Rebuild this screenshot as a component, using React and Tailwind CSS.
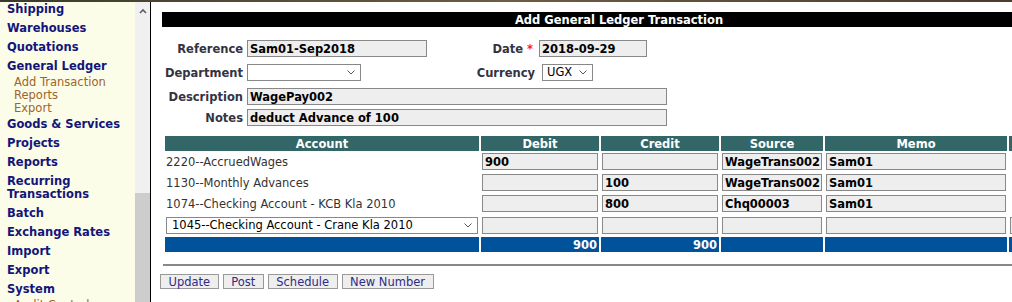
const menu = [
  { t: "Shipping" },
  { t: "Warehouses" },
  { t: "Quotations" },
  { t: "General Ledger", sub: ["Add Transaction", "Reports", "Export"] },
  { t: "Goods & Services" },
  { t: "Projects" },
  { t: "Reports" },
  { t: "Recurring Transactions" },
  { t: "Batch" },
  { t: "Exchange Rates" },
  { t: "Import" },
  { t: "Export" },
  { t: "System", sub: ["Audit Control"] },
];

const lines = [
  { account: "2220--AccruedWages", debit: "900", credit: "", source: "WageTrans002", memo: "Sam01" },
  { account: "1130--Monthly Advances", debit: "", credit: "100", source: "WageTrans002", memo: "Sam01" },
  { account: "1074--Checking Account - KCB Kla 2010", debit: "", credit: "800", source: "Chq00003", memo: "Sam01" },
];

function Chevron() {
  return (
    <svg width="8" height="5" viewBox="0 0 8 5" className="shrink-0">
      <polyline points="0.5,0.5 4,4 7.5,0.5" fill="none" stroke="#555" strokeWidth="1" />
    </svg>
  );
}

function Field({ value, className = "" }) {
  return (
    <div className={`h-[17px] border border-[#888] bg-[#eee] pl-[2px] font-bold text-black leading-[16px] whitespace-nowrap overflow-hidden ${className}`}>
      {value}
    </div>
  );
}

function Select({ value, className = "" }) {
  return (
    <div className={`h-[17px] border border-[#888] bg-white flex items-center justify-between pl-[4px] pr-[5px] text-black whitespace-nowrap ${className}`}>
      <span>{value}</span>
      <Chevron />
    </div>
  );
}

function Label({ children, className = "w-[81px]" }) {
  return <div className={`text-right font-bold text-[#333344] leading-[18px] whitespace-nowrap ${className}`}>{children}</div>;
}

export default function App() {
  return (
    <div className="w-[1012px] h-[302px] overflow-hidden bg-white font-['DejaVu_Sans',sans-serif] text-[11.5px] flex flex-col">
      <div className="h-[2px] shrink-0 bg-gradient-to-r from-[#3a3a2c] via-[#6e5c44] to-[#4a3c2e]" />
      <div className="flex flex-1 min-h-0">
        <aside className="w-[135px] shrink-0 bg-[#fbfde8] overflow-hidden">
          <div className="-mt-[2.5px] pr-[4px]">
            {menu.map((m, i) => (
              <div key={i}>
                <div className="px-[7px] py-[3px] leading-[13px] font-bold text-[#14147a]">{m.t}</div>
                {m.sub &&
                  m.sub.map((s) => (
                    <div key={s} className="pl-[14px] leading-[13px] text-[#a0642d]">
                      {s}
                    </div>
                  ))}
              </div>
            ))}
          </div>
        </aside>

        <div className="w-[15px] shrink-0 flex flex-col bg-[#f0f0f0]">
          <div className="h-[191px] flex justify-center pt-[6px]">
            <svg width="8" height="6" viewBox="0 0 8 6">
              <polyline points="1,5 4,2 7,5" fill="none" stroke="#606060" strokeWidth="1.6" />
            </svg>
          </div>
          <div className="flex-1 bg-[#cdcdcd]" />
        </div>
        <div className="w-px shrink-0 bg-black" />

        <main className="flex-1 min-w-0 overflow-hidden pl-[11px] pt-[10px]">
          <div className="w-[914px]">
            <div className="h-[15px] bg-black text-white font-bold text-center leading-[16px]">
              Add General Ledger Transaction
            </div>

            <div className="mt-[13px] flex h-[17px]">
              <Label>Reference</Label>
              <Field value="Sam01-Sep2018" className="ml-[4px] w-[180px]" />
              <Label className="w-[106px]">
                Date <span className="text-[#ff2020]">*</span>
              </Label>
              <Field value="2018-09-29" className="ml-[6px] w-[108px]" />
            </div>

            <div className="mt-[7px] flex h-[17px]">
              <Label>Department</Label>
              <Select value="" className="ml-[4px] w-[114px]" />
              <Label className="w-[174px]">Currency</Label>
              <Select value="UGX" className="ml-[7px] w-[51px]" />
            </div>

            <div className="mt-[7px] flex h-[17px]">
              <Label>Description</Label>
              <Field value="WagePay002" className="ml-[4px] w-[420px]" />
            </div>

            <div className="mt-[4px] flex h-[17px]">
              <Label>Notes</Label>
              <Field value="deduct Advance of 100" className="ml-[4px] w-[420px]" />
            </div>

            <div className="mt-[10px] ml-[3px] grid grid-cols-[314px_118px_118px_102px_182px_80px] gap-[2px]">
              {["Account", "Debit", "Credit", "Source", "Memo", ""].map((h, i) => (
                <div key={i} className="h-[15px] bg-[#336666] text-white font-bold text-center leading-[16px]">
                  {h}
                </div>
              ))}

              {lines.map((l, i) => [
                <div key={`a${i}`} className="h-[19px] leading-[18px] pl-[1px] text-[#333] whitespace-nowrap">
                  {l.account}
                </div>,
                <div key={`d${i}`} className="h-[19px] px-[1px]"><Field value={l.debit} /></div>,
                <div key={`c${i}`} className="h-[19px] px-[1px]"><Field value={l.credit} /></div>,
                <div key={`s${i}`} className="h-[19px] px-[1px]"><Field value={l.source} /></div>,
                <div key={`m${i}`} className="h-[19px] px-[1px]"><Field value={l.memo} /></div>,
                <div key={`x${i}`} className="h-[19px]" />,
              ])}

              <div className="h-[19px] pt-[1px] px-[1px]">
                <Select value="1045--Checking Account - Crane Kla 2010" className="pl-[5px]" />
              </div>
              <div className="h-[19px] pt-[1px] px-[1px]"><Field value="" /></div>
              <div className="h-[19px] pt-[1px] px-[1px]"><Field value="" /></div>
              <div className="h-[19px] pt-[1px] px-[1px]"><Field value="" /></div>
              <div className="h-[19px] pt-[1px] px-[1px]"><Field value="" /></div>
              <div className="h-[19px] pt-[1px] px-[1px]"><Field value="" /></div>

              {["", "900", "900", "", "", ""].map((v, i) => (
                <div key={`t${i}`} className="h-[15px] bg-[#00529b] text-white font-bold text-right pr-[2px] leading-[16px]">
                  {v}
                </div>
              ))}
            </div>

            <div className="mt-[12px] ml-[1px] h-[2px] bg-[#888]" />

            <div className="mt-[8px] -ml-[2px] flex gap-[4px]">
              {["Update", "Post", "Schedule", "New Number"].map((b) => (
                <div key={b} className="h-[15px] border border-[#999] bg-[#eee] px-[7.5px] text-[#2e2a8a] leading-[14px]">
                  {b}
                </div>
              ))}
            </div>
          </div>
        </main>
      </div>
    </div>
  );
}
